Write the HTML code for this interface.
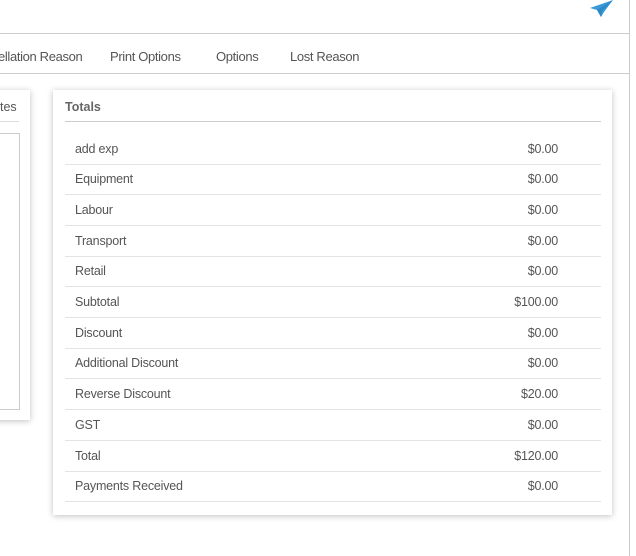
<!DOCTYPE html>
<html><head><style>
body{margin:0;width:636px;height:556px;background:#fff;font-family:"Liberation Sans",sans-serif;position:relative;overflow:hidden;color:#555}
.abs{position:absolute}
.nav{position:absolute;top:49px;font-size:13px;letter-spacing:-0.35px;color:#555}
.row{position:absolute;left:65px;width:536px;height:30px;border-bottom:1px solid #e4e4e4;font-size:12.5px;letter-spacing:-0.2px;color:#555}
.row span{position:absolute;top:8px}
.row .l{left:10px}.row .r{right:43px}
</style></head><body>
<div class="abs" style="left:629px;top:0;width:1px;height:556px;background:#ccc"></div>
<div class="abs" style="left:0;top:33px;width:630px;height:1px;background:#ccc"></div>
<div class="abs" style="left:0;top:73px;width:630px;height:1px;background:#ccc"></div>
<svg class="abs" style="left:588px;top:0" width="26" height="18" viewBox="0 0 26 18"><path d="M25 0 L2 8 L9 10 L13 17 L16 12 Z" fill="#3a9ad9"/><path d="M25 0 L9 10 L13 17 L14 11 Z" fill="#2f88c4"/></svg>
<div class="nav" style="left:-2px">ellation Reason</div>
<div class="nav" style="left:110px">Print Options</div>
<div class="nav" style="left:216px">Options</div>
<div class="nav" style="left:290px">Lost Reason</div>
<div class="abs" style="left:-10px;top:90px;width:40px;height:330px;background:#fff;box-shadow:0 1px 6px rgba(0,0,0,.25)"></div>
<div class="abs" style="left:0px;top:100px;font-size:12.5px;color:#555">tes</div>
<div class="abs" style="left:0;top:121px;width:19px;height:1px;background:#ddd"></div>
<div class="abs" style="left:-2px;top:133px;width:20px;height:275px;border:1px solid #ccc"></div>
<div class="abs" style="left:53px;top:90px;width:559px;height:425px;background:#fff;box-shadow:0 1px 6px rgba(0,0,0,.25)"></div>
<div class="abs" style="left:65px;top:100px;font-size:12.5px;font-weight:bold;color:#666">Totals</div>
<div class="abs" style="left:65px;top:121px;width:536px;height:1px;background:#ccc"></div>
<div class="row" style="top:134px"><span class="l">add exp</span><span class="r">$0.00</span></div>
<div class="row" style="top:164px"><span class="l">Equipment</span><span class="r">$0.00</span></div>
<div class="row" style="top:195px"><span class="l">Labour</span><span class="r">$0.00</span></div>
<div class="row" style="top:226px"><span class="l">Transport</span><span class="r">$0.00</span></div>
<div class="row" style="top:256px"><span class="l">Retail</span><span class="r">$0.00</span></div>
<div class="row" style="top:287px"><span class="l">Subtotal</span><span class="r">$100.00</span></div>
<div class="row" style="top:318px"><span class="l">Discount</span><span class="r">$0.00</span></div>
<div class="row" style="top:348px"><span class="l">Additional Discount</span><span class="r">$0.00</span></div>
<div class="row" style="top:379px"><span class="l">Reverse Discount</span><span class="r">$20.00</span></div>
<div class="row" style="top:410px"><span class="l">GST</span><span class="r">$0.00</span></div>
<div class="row" style="top:441px"><span class="l">Total</span><span class="r">$120.00</span></div>
<div class="row" style="top:471px"><span class="l">Payments Received</span><span class="r">$0.00</span></div>
</body></html>
